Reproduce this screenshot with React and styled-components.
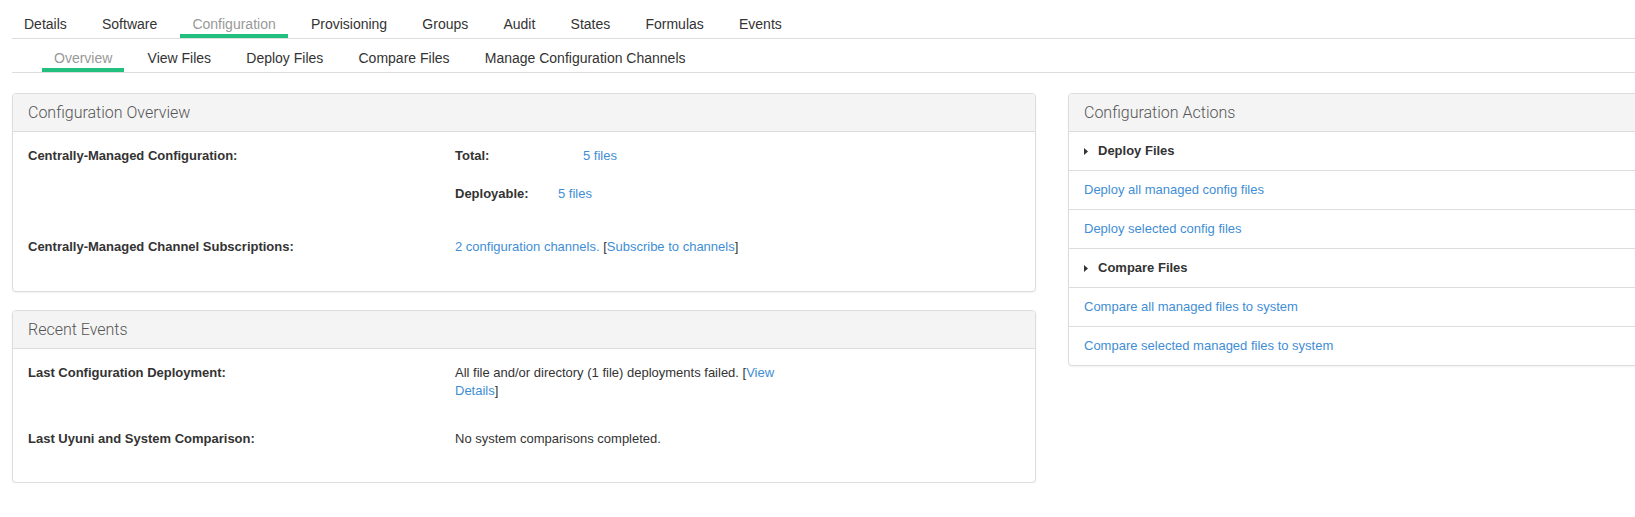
import styled, { createGlobalStyle } from "styled-components";

const GlobalStyle = createGlobalStyle`
  html, body {
    margin: 0;
    padding: 0;
    background: #fff;
    overflow: hidden;
  }
  body {
    font-family: "Liberation Sans", Arial, sans-serif;
    font-size: 13px;
    line-height: 18px;
    color: #333;
  }
`;

const GREEN = "#23bf7f";
const LINK = "#3f8ed5";

const Page = styled.div`
  padding-left: 12px;
`;

const TabBar = styled.ul`
  display: flex;
  gap: 11.2px;
  list-style: none;
  margin: 0;
  padding: 0 0 0 ${(p) => p.$indent}px;
  border-bottom: 1px solid #ddd;
`;

const Tab = styled.li`
  padding: ${(p) => p.$top}px 12px 0;
  font-size: 14px;
  line-height: 20px;
  white-space: nowrap;
  color: ${(p) => (p.$active ? "#999" : "#333")};
  border-bottom: 4px solid ${(p) => (p.$active ? GREEN : "transparent")};
  cursor: pointer;
`;

const Content = styled.div`
  display: flex;
  align-items: flex-start;
  gap: 32px;
  margin-top: 20px;
`;

const Column = styled.div`
  display: flex;
  flex-direction: column;
  gap: 18px;
  width: 1024px;
  flex-shrink: 0;
`;

const Panel = styled.div`
  background: #fff;
  border: 1px solid #ddd;
  border-radius: 4px;
  box-shadow: 0 1px 2px rgba(0, 0, 0, 0.06);
`;

const PanelHeading = styled.div`
  background: #f4f4f4;
  padding: 10px 15px;
  border-bottom: 1px solid #ddd;
  border-radius: 3px 3px 0 0;
`;

const PanelTitle = styled.h3`
  margin: 0;
  font-family: Roboto, "Liberation Sans", sans-serif;
  font-weight: 300;
  font-size: 16px;
  line-height: 17px;
  color: #555;
`;

const PanelBody = styled.div`
  padding: 15px 15px ${(p) => p.$bottom || 0}px;
`;

const InfoRow = styled.div`
  display: grid;
  grid-template-columns: 427px 340px;
  padding-bottom: ${(p) => p.$space}px;
`;

const Label = styled.div`
  font-weight: bold;
  margin-bottom: 20px;
`;

const Value = styled.div`
  margin-bottom: 20px;
`;

const SubRow = styled.div`
  display: flex;
  margin-bottom: 20px;
`;

const SubLabel = styled.div`
  width: ${(p) => p.$width}px;
  flex-shrink: 0;
  font-weight: bold;
`;

const Link = styled.a`
  color: ${LINK};
  text-decoration: none;
  cursor: pointer;
`;

const ActionList = styled.div`
  display: flex;
  flex-direction: column;
`;

const ActionItem = styled.div`
  display: flex;
  align-items: center;
  padding: 10px 15px;
  font-weight: ${(p) => (p.$header ? "bold" : "normal")};
  color: ${(p) => (p.$header ? "#333" : LINK)};

  &:not(:last-child) {
    border-bottom: 1px solid #ddd;
  }

  & svg {
    margin-right: 10px;
    flex-shrink: 0;
  }
`;

const Caret = () => (
  <svg width="4" height="7" viewBox="0 0 4 7">
    <polygon points="0,0 4,3.5 0,7" fill="#333" />
  </svg>
);

const mainTabs = [
  "Details",
  "Software",
  "Configuration",
  "Provisioning",
  "Groups",
  "Audit",
  "States",
  "Formulas",
  "Events",
];

const subTabs = [
  "Overview",
  "View Files",
  "Deploy Files",
  "Compare Files",
  "Manage Configuration Channels",
];

const actions = [
  { text: "Deploy Files", header: true },
  { text: "Deploy all managed config files" },
  { text: "Deploy selected config files" },
  { text: "Compare Files", header: true },
  { text: "Compare all managed files to system" },
  { text: "Compare selected managed files to system" },
];

export default function App() {
  return (
    <>
      <GlobalStyle />
      <Page>
        <TabBar $indent={0}>
          {mainTabs.map((t) => (
            <Tab key={t} $top={14} $active={t === "Configuration"}>
              {t}
            </Tab>
          ))}
        </TabBar>
        <TabBar $indent={30}>
          {subTabs.map((t) => (
            <Tab key={t} $top={9} $active={t === "Overview"}>
              {t}
            </Tab>
          ))}
        </TabBar>

        <Content>
          <Column>
            <Panel>
              <PanelHeading>
                <PanelTitle>Configuration Overview</PanelTitle>
              </PanelHeading>
              <PanelBody>
                <InfoRow $space={15}>
                  <Label>Centrally-Managed Configuration:</Label>
                  <div>
                    <SubRow>
                      <SubLabel $width={128}>Total:</SubLabel>
                      <Link>5 files</Link>
                    </SubRow>
                    <SubRow>
                      <SubLabel $width={103}>Deployable:</SubLabel>
                      <Link>5 files</Link>
                    </SubRow>
                  </div>
                </InfoRow>
                <InfoRow $space={15}>
                  <Label>Centrally-Managed Channel Subscriptions:</Label>
                  <Value>
                    <Link>2 configuration channels.</Link> [
                    <Link>Subscribe to channels</Link>]
                  </Value>
                </InfoRow>
              </PanelBody>
            </Panel>

            <Panel>
              <PanelHeading>
                <PanelTitle>Recent Events</PanelTitle>
              </PanelHeading>
              <PanelBody $bottom={4}>
                <InfoRow $space={10}>
                  <Label>Last Configuration Deployment:</Label>
                  <Value>
                    All file and/or directory (1 file) deployments failed. [
                    <Link>View Details</Link>]
                  </Value>
                </InfoRow>
                <InfoRow $space={10}>
                  <Label>Last Uyuni and System Comparison:</Label>
                  <Value>No system comparisons completed.</Value>
                </InfoRow>
              </PanelBody>
            </Panel>
          </Column>

          <Column>
            <Panel>
              <PanelHeading>
                <PanelTitle>Configuration Actions</PanelTitle>
              </PanelHeading>
              <ActionList>
                {actions.map((a) => (
                  <ActionItem key={a.text} $header={a.header}>
                    {a.header && <Caret />}
                    {a.header ? a.text : <Link>{a.text}</Link>}
                  </ActionItem>
                ))}
              </ActionList>
            </Panel>
          </Column>
        </Content>
      </Page>
    </>
  );
}
